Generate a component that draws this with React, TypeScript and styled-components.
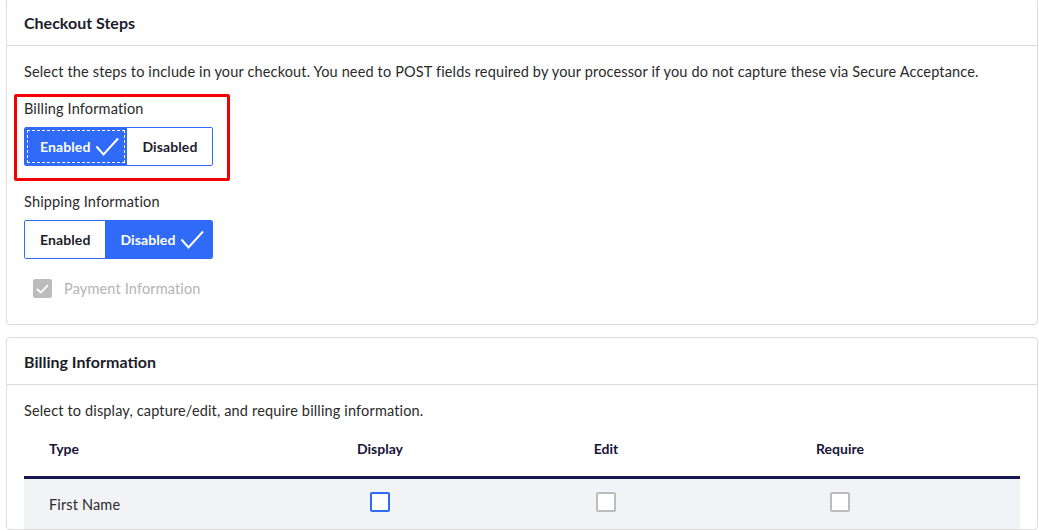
import React from "react";
import styled, { createGlobalStyle } from "styled-components";

const GlobalStyle = createGlobalStyle`
  html, body { margin: 0; padding: 0; background: #ffffff; }
  body { font-family: Lato, "Liberation Sans", sans-serif; color: #2a2a2a; font-size: 14.5px; letter-spacing: 0.15px; }
  * { box-sizing: border-box; }
`;

const Page = styled.div`
  display: flex;
  flex-direction: column;
  gap: 12px;
  padding: 0 1px 0 6px;
  margin-top: -2px;
`;

const Panel = styled.section`
  border: 1px solid #dcdcdc;
  border-radius: 4px;
  background: #fff;
`;

const PanelHeader = styled.header`
  height: 47px;
  display: flex;
  align-items: center;
  padding: 0 17px;
  border-bottom: 1px solid #dcdcdc;
  font-weight: 700;
  font-size: 16px;
  letter-spacing: 0;
  color: #1c1c2b;
`;

const PanelBody = styled.div<{ $bottom?: number }>`
  padding: 16px 17px ${(p) => p.$bottom ?? 0}px;
  display: flex;
  flex-direction: column;
`;

const Description = styled.p`
  margin: 0;
  line-height: 20px;
  color: #2a2a2a;
`;

const FieldGroup = styled.div<{ $top: number }>`
  position: relative;
  align-self: flex-start;
  margin-top: ${(p) => p.$top}px;
  display: flex;
  flex-direction: column;
  gap: 8px;
`;

const Highlight = styled.div`
  position: absolute;
  top: -5px;
  left: -10px;
  right: -17px;
  bottom: -15px;
  border: 3px solid #f40000;
  border-radius: 2px;
  pointer-events: none;
`;

const FieldLabel = styled.div`
  line-height: 20px;
  color: #2a2a2a;
`;

const Toggle = styled.div`
  display: inline-flex;
  height: 39px;
  border: 1px solid #2f6bf6;
  border-radius: 2px;
  overflow: hidden;
`;

const Segment = styled.div<{ $active: boolean; $focused?: boolean }>`
  position: relative;
  display: flex;
  align-items: center;
  padding: 0 ${(p) => (p.$active ? 8 : 15)}px 0 15px;
  font-weight: 700;
  font-size: 14px;
  letter-spacing: 0.1px;
  background: ${(p) => (p.$active ? "#2f6bf6" : "#fff")};
  color: ${(p) => (p.$active ? "#fff" : "#1c1c2b")};
  ${(p) =>
    p.$focused
      ? `&::after {
          content: "";
          position: absolute;
          inset: 2px;
          border: 1px dashed #ffffff;
        }`
      : ""}
`;

const CheckMark = styled.svg`
  margin-left: 5px;
  width: 24px;
  height: 20px;
`;

const PaymentRow = styled.div`
  display: flex;
  align-items: center;
  gap: 12px;
  margin-top: 20px;
  margin-left: 9px;
`;

const GrayBox = styled.div`
  width: 19px;
  height: 19px;
  border-radius: 2px;
  background: #bcbcbc;
  display: flex;
  align-items: center;
  justify-content: center;
`;

const MutedText = styled.span`
  color: #b3b3b3;
`;

const Table = styled.div`
  margin-top: 4px;
  display: grid;
  grid-template-columns: 243px 226px 226px 242px 1fr;
`;

const HeadCell = styled.div<{ $align?: string }>`
  height: 54px;
  display: flex;
  align-items: center;
  justify-content: ${(p) => p.$align ?? "center"};
  padding-left: ${(p) => (p.$align ? 25 : 0)}px;
  padding-bottom: 4px;
  font-weight: 700;
  font-size: 14px;
  letter-spacing: 0;
  color: #16163a;
  border-bottom: 3px solid #16164e;
`;

const BodyCell = styled.div<{ $align?: string }>`
  height: 50px;
  display: flex;
  align-items: center;
  justify-content: ${(p) => p.$align ?? "center"};
  padding-left: ${(p) => (p.$align ? 25 : 0)}px;
  background: #f2f3f7;
  color: #2a2a2a;
`;

const Box = styled.div<{ $blue?: boolean }>`
  width: 20px;
  height: 20px;
  margin-top: -5px;
  border: 2px solid ${(p) => (p.$blue ? "#2f6bf6" : "#bdbdbd")};
  border-radius: 2px;
  background: #fff;
`;

const Check = () => (
  <CheckMark viewBox="0 0 24 20" fill="none">
    <path d="M1.5 9.5 L8.5 17.5 L23 1.5" stroke="#ffffff" strokeWidth="2" />
  </CheckMark>
);

type ToggleProps = { value: "Enabled" | "Disabled"; focused?: boolean };

const ToggleGroup = ({ value, focused }: ToggleProps) => (
  <Toggle>
    {(["Enabled", "Disabled"] as const).map((opt) => (
      <Segment key={opt} $active={opt === value} $focused={focused && opt === value}>
        {opt}
        {opt === value && <Check />}
      </Segment>
    ))}
  </Toggle>
);

export default function App() {
  return (
    <>
      <GlobalStyle />
      <Page>
        <Panel>
          <PanelHeader>Checkout Steps</PanelHeader>
          <PanelBody $bottom={26}>
            <Description>
              Select the steps to include in your checkout. You need to POST fields required by your
              processor if you do not capture these via Secure Acceptance.
            </Description>
            <FieldGroup $top={17}>
              <Highlight />
              <FieldLabel>Billing Information</FieldLabel>
              <ToggleGroup value="Enabled" focused />
            </FieldGroup>
            <FieldGroup $top={26}>
              <FieldLabel>Shipping Information</FieldLabel>
              <ToggleGroup value="Disabled" />
            </FieldGroup>
            <PaymentRow>
              <GrayBox>
                <svg width="13" height="10" viewBox="0 0 13 10" fill="none">
                  <path d="M1 5 L4.8 8.6 L12 1.2" stroke="#fff" strokeWidth="1.8" />
                </svg>
              </GrayBox>
              <MutedText>Payment Information</MutedText>
            </PaymentRow>
          </PanelBody>
        </Panel>
        <Panel>
          <PanelHeader>Billing Information</PanelHeader>
          <PanelBody>
            <Description>Select to display, capture/edit, and require billing information.</Description>
            <Table>
              <HeadCell $align="flex-start">Type</HeadCell>
              <HeadCell>Display</HeadCell>
              <HeadCell>Edit</HeadCell>
              <HeadCell>Require</HeadCell>
              <HeadCell />
              <BodyCell $align="flex-start">First Name</BodyCell>
              <BodyCell>
                <Box $blue />
              </BodyCell>
              <BodyCell>
                <Box />
              </BodyCell>
              <BodyCell>
                <Box />
              </BodyCell>
              <BodyCell />
            </Table>
          </PanelBody>
        </Panel>
      </Page>
    </>
  );
}
